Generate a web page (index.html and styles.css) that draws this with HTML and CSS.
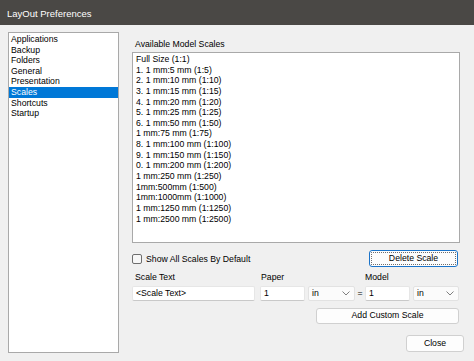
FILE: index.html
```html
<!DOCTYPE html>
<html>
<head>
<meta charset="utf-8">
<link rel="stylesheet" href="styles.css">
</head>
<body>
<div class="window">
  <div class="titlebar">LayOut Preferences</div>
  <div class="main">
    <ul class="nav">
      <li>Applications</li>
      <li>Backup</li>
      <li>Folders</li>
      <li>General</li>
      <li>Presentation</li>
      <li class="sel">Scales</li>
      <li>Shortcuts</li>
      <li>Startup</li>
    </ul>
    <div class="panel">
      <div class="caption">Available Model Scales</div>
      <ul class="scales">
        <li>Full Size (1:1)</li>
        <li>1. 1 mm:5 mm (1:5)</li>
        <li>2. 1 mm:10 mm (1:10)</li>
        <li>3. 1 mm:15 mm (1:15)</li>
        <li>4. 1 mm:20 mm (1:20)</li>
        <li>5. 1 mm:25 mm (1:25)</li>
        <li>6. 1 mm:50 mm (1:50)</li>
        <li>1 mm:75 mm (1:75)</li>
        <li>8. 1 mm:100 mm (1:100)</li>
        <li>9. 1 mm:150 mm (1:150)</li>
        <li>0. 1 mm:200 mm (1:200)</li>
        <li>1 mm:250 mm (1:250)</li>
        <li>1mm:500mm (1:500)</li>
        <li>1mm:1000mm (1:1000)</li>
        <li>1 mm:1250 mm (1:1250)</li>
        <li>1 mm:2500 mm (1:2500)</li>
      </ul>
      <div class="optrow">
        <label class="check"><span class="box"></span>Show All Scales By Default</label>
        <button class="btn focus del">Delete Scale</button>
      </div>
      <div class="grid">
        <div class="lbl l1">Scale Text</div>
        <div class="lbl l2">Paper</div>
        <div class="lbl l5">Model</div>
        <div class="field wide">&lt;Scale Text&gt;</div>
        <div class="field">1</div>
        <div class="select">in<svg width="8" height="5" viewBox="0 0 8 5"><polyline points="0.5,0.5 4,4 7.5,0.5" fill="none" stroke="#707070" stroke-width="0.9"/></svg></div>
        <div class="eq">=</div>
        <div class="field">1</div>
        <div class="select">in<svg width="8" height="5" viewBox="0 0 8 5"><polyline points="0.5,0.5 4,4 7.5,0.5" fill="none" stroke="#707070" stroke-width="0.9"/></svg></div>
      </div>
      <div class="addrow">
        <button class="btn add">Add Custom Scale</button>
      </div>
      <div class="footer">
        <button class="btn close">Close</button>
      </div>
    </div>
  </div>
</div>
</body>
</html>
```
FILE: styles.css
```css
* { box-sizing: border-box; }
html, body {
  margin: 0;
  padding: 0;
  width: 474px;
  height: 361px;
  overflow: hidden;
  background: #f0f0f0;
  font-family: "Liberation Sans", Arial, sans-serif;
  font-size: 8.7px;
  color: #000;
}
.window {
  display: flex;
  flex-direction: column;
  height: 361px;
}
.titlebar {
  height: 25px;
  background: #4a4845;
  color: #fff;
  font-size: 9.5px;
  line-height: 25px;
  padding-left: 7px;
  padding-top: 1px;
}
.main {
  display: flex;
  align-items: flex-start;
  padding: 7px 0 0 8px;
}
ul {
  list-style: none;
  margin: 0;
}
.nav {
  width: 111px;
  height: 321px;
  background: #fff;
  border: 1px solid #a9a9a9;
  padding: 1px 0 0 0;
}
.nav li {
  height: 10.6px;
  line-height: 10.6px;
  padding-left: 2px;
  white-space: nowrap;
}
.nav li.sel {
  background: #0078d7;
  color: #fff;
}
.panel {
  margin-left: 13px;
  width: 328px;
  display: flex;
  flex-direction: column;
}
.caption {
  margin-top: 7px;
  padding-left: 3px;
  line-height: 11px;
  height: 11px;
}
.scales {
  margin-top: 2px;
  height: 191px;
  background: #fff;
  border: 1px solid #a9a9a9;
  padding: 1px 0 0 3px;
}
.scales li {
  height: 10.65px;
  line-height: 10.65px;
  white-space: nowrap;
}
.optrow {
  margin-top: 7px;
  height: 17px;
  display: flex;
  align-items: center;
  justify-content: space-between;
}
.check {
  display: flex;
  align-items: center;
  gap: 4px;
}
.box {
  width: 10px;
  height: 10px;
  border: 1px solid #6e6e6e;
  border-radius: 2px;
  background: #f7f7f7;
}
.btn {
  font-family: inherit;
  font-size: 8.7px;
  color: #000;
  background: #fdfdfd;
  border: 1px solid #d0d0d0;
  border-radius: 3px;
  padding: 0;
  line-height: 1;
}
.btn.focus {
  border: 1.5px solid #1a73c9;
  outline: 1px dotted #6f6f6f;
  outline-offset: -3.5px;
}
.del {
  width: 89px;
  height: 17px;
  margin-right: 2px;
}
.grid {
  margin-top: 5px;
  display: grid;
  grid-template-columns: 125px 45px 47px 4px 45px 46px;
  grid-template-rows: 11px 15px;
  column-gap: 3px;
  row-gap: 3px;
}
.lbl {
  line-height: 11px;
  white-space: nowrap;
}
.l1 { grid-column: 1; padding-left: 3px; }
.l2 { grid-column: 2; padding-left: 1px; }
.l5 { grid-column: 5; }
.field {
  grid-row: 2;
  background: #fff;
  border: 1px solid #e6e6e6;
  border-bottom-color: #c9c9c9;
  border-radius: 2px;
  padding-left: 3px;
  line-height: 13px;
  white-space: nowrap;
}
.field.wide { width: 123px; }
.select {
  grid-row: 2;
  background: #fbfbfb;
  border: 1px solid #e2e2e2;
  border-radius: 2px;
  padding: 0 4px 0 3px;
  line-height: 13px;
  display: flex;
  justify-content: space-between;
  align-items: center;
}
.eq {
  grid-row: 2;
  line-height: 15px;
  display: flex;
  justify-content: center;
  overflow: visible;
}
.addrow {
  margin-top: 6.5px;
  display: flex;
  justify-content: flex-end;
}
.add {
  width: 143px;
  height: 16px;
  margin-right: 1px;
}
.footer {
  margin-top: 11.5px;
  margin-right: -4px;
  display: flex;
  justify-content: flex-end;
}
.close {
  width: 58px;
  height: 16.5px;
}
```
